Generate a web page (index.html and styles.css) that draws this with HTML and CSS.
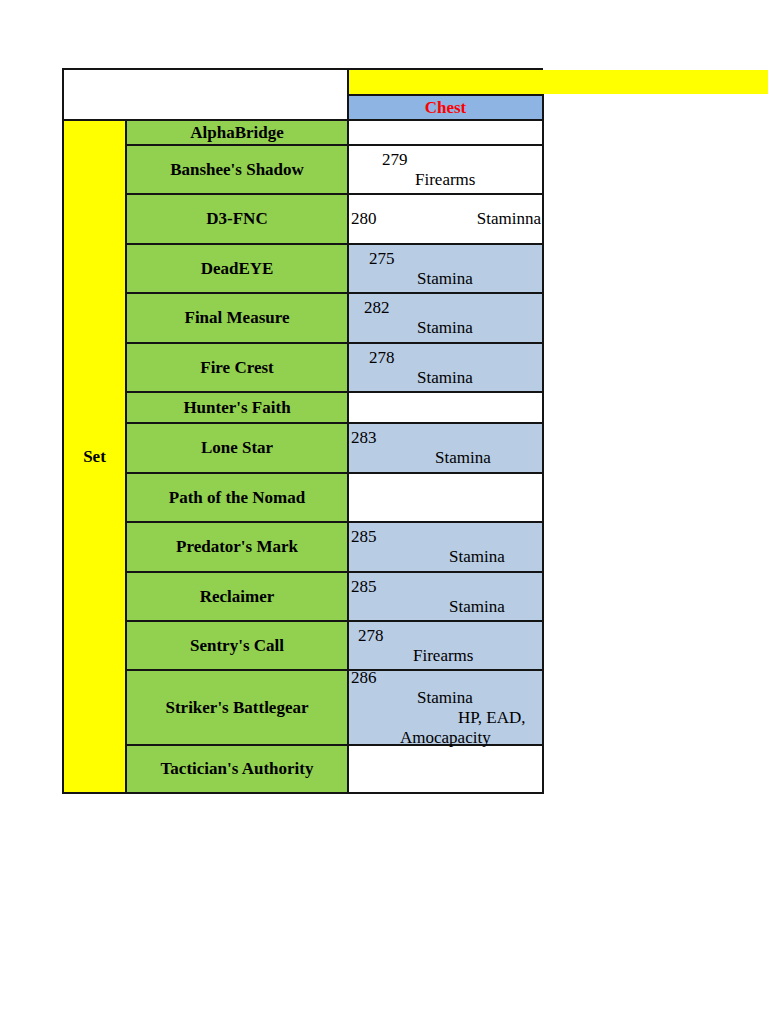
FILE: index.html
```html
<!DOCTYPE html>
<html>
<head>
<meta charset="utf-8">
<link rel="stylesheet" href="styles.css">
</head>
<body>
<table class="sheet">
  <colgroup>
    <col class="c-set">
    <col class="c-name">
    <col class="c-val">
  </colgroup>
  <tr class="h-yellow">
    <td class="corner" colspan="2" rowspan="2"></td>
    <td class="yellow"><div class="yellow-bar"></div></td>
  </tr>
  <tr class="h-chest">
    <td class="chest">Chest</td>
  </tr>
  <tr class="r25">
    <td class="set" rowspan="14">Set</td>
    <td class="name">AlphaBridge</td>
    <td class="val"></td>
  </tr>
  <tr class="r49">
    <td class="name">Banshee's Shadow</td>
    <td class="val"><div class="lines"><div class="i33">279</div><div class="i66">Firearms</div></div></td>
  </tr>
  <tr class="r50">
    <td class="name">D3-FNC</td>
    <td class="val"><div class="spread"><span>280</span><span>Staminna</span></div></td>
  </tr>
  <tr class="r49">
    <td class="name">DeadEYE</td>
    <td class="val blue"><div class="lines"><div class="i20">275</div><div class="i68">Stamina</div></div></td>
  </tr>
  <tr class="r50">
    <td class="name">Final Measure</td>
    <td class="val blue"><div class="lines"><div class="i15">282</div><div class="i68">Stamina</div></div></td>
  </tr>
  <tr class="r49">
    <td class="name">Fire Crest</td>
    <td class="val blue"><div class="lines"><div class="i20">278</div><div class="i68">Stamina</div></div></td>
  </tr>
  <tr class="r31">
    <td class="name">Hunter's Faith</td>
    <td class="val"></td>
  </tr>
  <tr class="r50">
    <td class="name">Lone Star</td>
    <td class="val blue"><div class="lines"><div class="i2">283</div><div class="i86">Stamina</div></div></td>
  </tr>
  <tr class="r49">
    <td class="name">Path of the Nomad</td>
    <td class="val"></td>
  </tr>
  <tr class="r50">
    <td class="name">Predator's Mark</td>
    <td class="val blue"><div class="lines"><div class="i2">285</div><div class="i100">Stamina</div></div></td>
  </tr>
  <tr class="r49">
    <td class="name">Reclaimer</td>
    <td class="val blue"><div class="lines"><div class="i2">285</div><div class="i100">Stamina</div></div></td>
  </tr>
  <tr class="r49">
    <td class="name">Sentry's Call</td>
    <td class="val blue"><div class="lines"><div class="i9">278</div><div class="i64">Firearms</div></div></td>
  </tr>
  <tr class="r75">
    <td class="name">Striker's Battlegear</td>
    <td class="val blue"><div class="lines tall"><div class="i2">286</div><div class="i68">Stamina</div><div class="i109">HP, EAD,</div><div class="i51">Amocapacity</div></div></td>
  </tr>
  <tr class="r48">
    <td class="name">Tactician's Authority</td>
    <td class="val"></td>
  </tr>
</table>
</body>
</html>
```

FILE: styles.css
```css
html, body {
  margin: 0;
  padding: 0;
  background: #ffffff;
  overflow: hidden;
}

body {
  font-family: "Liberation Serif", "Times New Roman", serif;
  font-size: 17px;
  color: #000;
}

.sheet {
  border-collapse: collapse;
  table-layout: fixed;
  width: 480px;
  margin: 68px 0 0 62px;
  font-family: "Liberation Serif", "Times New Roman", serif;
}

.c-set { width: 63px; }
.c-name { width: 222px; }
.c-val { width: 195px; }

.sheet td {
  border: 2px solid #141414;
  padding: 0;
  vertical-align: middle;
  font-family: "Liberation Serif", "Times New Roman", serif;
  font-size: 17px;
}

.h-yellow { height: 25px; }
.h-chest { height: 25px; }
.r25 { height: 25px; }
.r31 { height: 31px; }
.r48 { height: 48px; }
.r49 { height: 49px; }
.r50 { height: 50px; }
.r75 { height: 75px; }

.corner { background: #fff; }

.sheet td.yellow {
  border-right: none;
  padding: 0;
  overflow: visible;
}

.yellow-bar {
  height: 24px;
  background: #ffff00;
  margin-right: -230px;
}

.chest {
  background: #8db4e2;
  color: #ff0000;
  font-weight: bold;
  text-align: center;
}

.set {
  background: #ffff00;
  font-weight: bold;
  text-align: center;
}

.name {
  background: #92d050;
  font-weight: bold;
  text-align: center;
}

.val { background: #fff; }
.val.blue { background: #b8cce4; }

.lines {
  line-height: 20px;
  white-space: nowrap;
  font-family: "Liberation Serif", "Times New Roman", serif;
}

.lines.tall {
  height: 73px;
  display: flex;
  flex-direction: column;
  justify-content: center;
  overflow: visible;
}

.spread {
  display: flex;
  justify-content: space-between;
  padding: 0 1px 0 2px;
  line-height: 20px;
  font-family: "Liberation Serif", "Times New Roman", serif;
}

.i2 { padding-left: 2px; }
.i9 { padding-left: 9px; }
.i15 { padding-left: 15px; }
.i20 { padding-left: 20px; }
.i33 { padding-left: 33px; }
.i51 { padding-left: 51px; }
.i64 { padding-left: 64px; }
.i66 { padding-left: 66px; }
.i68 { padding-left: 68px; }
.i86 { padding-left: 86px; }
.i100 { padding-left: 100px; }
.i109 { padding-left: 109px; }
```
